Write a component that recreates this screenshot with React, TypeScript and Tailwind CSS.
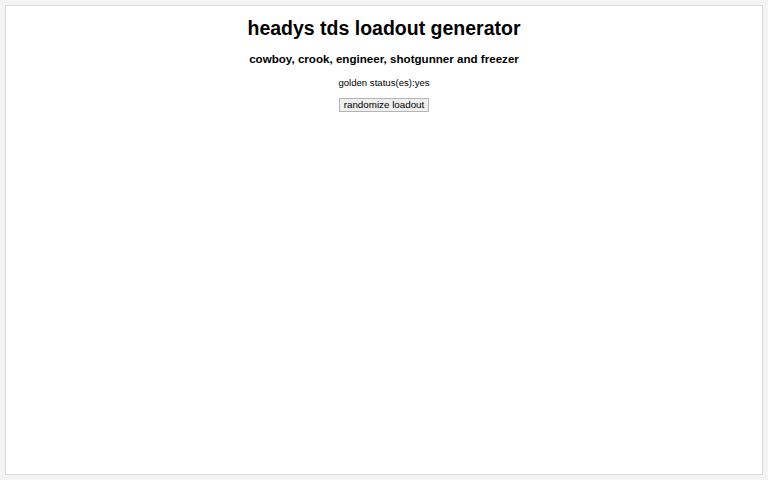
import React, { useState } from 'react'

const classes = ['cowboy', 'crook', 'engineer', 'shotgunner', 'freezer']

const joinNames = (names: string[]) =>
  names.slice(0, -1).join(', ') + ' and ' + names[names.length - 1]

const App: React.FC = () => {
  const [loadout, setLoadout] = useState(classes)
  const [golden, setGolden] = useState(true)

  const randomize = () => {
    const shuffled = [...classes].sort(() => Math.random() - 0.5)
    setLoadout(shuffled)
    setGolden(Math.random() > 0.5)
  }

  return (
    <div className="min-h-[480px] bg-[#f3f3f3] p-[5px] font-['Liberation_Sans',Arial,sans-serif] text-black">
      <div className="flex h-[470px] flex-col items-center border border-[#dcdcdc] bg-white">
        <h1 className="mt-[10px] text-[19.5px] font-bold leading-[24px]">headys tds loadout generator</h1>
        <h2 className="mt-[12px] text-[11.6px] font-bold leading-[14px]">{joinNames(loadout)}</h2>
        <p className="mt-[10px] text-[9.6px] leading-[14px]">golden status(es):{golden ? 'yes' : 'no'}</p>
        <button
          onClick={randomize}
          className="mt-[8px] border border-[#b5b5b5] bg-[#efefef] px-[4px] text-[9.8px] leading-[12px]"
        >
          randomize loadout
        </button>
      </div>
    </div>
  )
}

export default App
